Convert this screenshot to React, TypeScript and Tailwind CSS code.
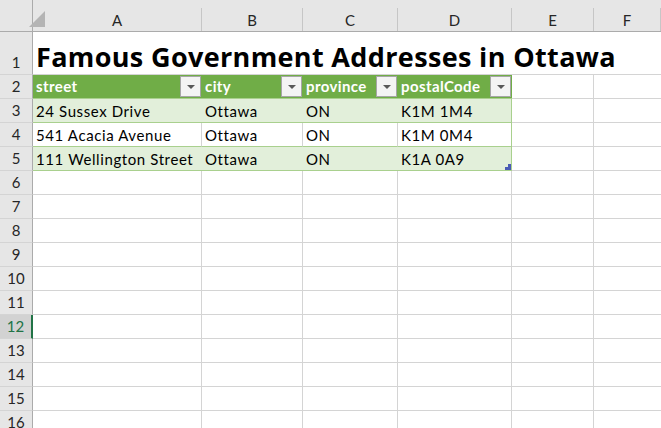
import React from "react";

const COLS = ["A", "B", "C", "D", "E", "F"];
const COL_W = ["w-[169px]", "w-[101px]", "w-[95px]", "w-[114px]", "w-[82px]", "flex-1"];

const HEADERS = ["street", "city", "province", "postalCode"];
const ROWS = [
  ["24 Sussex Drive", "Ottawa", "ON", "K1M 1M4"],
  ["541 Acacia Avenue", "Ottawa", "ON", "K1M 0M4"],
  ["111 Wellington Street", "Ottawa", "ON", "K1A 0A9"],
];

const font = { fontFamily: "Lato, 'Liberation Sans', sans-serif" };

function FilterButton() {
  return (
    <div className="w-[21px] h-[21px] shrink-0 border border-[#a6a6a6] bg-[#f4f4f4] flex items-center justify-center">
      <div className="w-0 h-0 border-l-[4px] border-r-[4px] border-t-[4px] border-l-transparent border-r-transparent border-t-[#595959]" />
    </div>
  );
}

function RowHeader({ n, h, selected }: { n: number; h: string; selected?: boolean }) {
  return (
    <div
      className={`w-[33px] shrink-0 ${h} flex items-end justify-center pb-[1px] text-[15px] tracking-normal border-b border-[#d4d4d4] ${
        selected
          ? "bg-[#d2d2d2] text-[#217346] border-r-2 border-r-[#217346]"
          : "bg-[#e6e6e6] text-[#262626] border-r border-r-[#ababab]"
      }`}
    >
      {n}
    </div>
  );
}

export default function App() {
  return (
    <div className="w-[661px] h-[428px] overflow-hidden bg-white text-[15px] text-black" style={font}>
      {/* column header */}
      <div className="flex h-[32px] bg-[#e6e6e6] border-b border-[#ababab]">
        <div className="w-[33px] shrink-0 border-r border-[#ababab] relative">
          <div className="absolute left-[13px] top-[11px] w-0 h-0 border-l-[16px] border-t-[16px] border-l-transparent border-t-transparent border-b-0 border-r-[16px] border-r-[#b4b4b4]" />
        </div>
        {COLS.map((c, i) => (
          <div key={c} className={`${COL_W[i]} shrink-0 pt-[8px]`}>
            <div className="h-[23px] border-r border-[#c6c6c6] flex items-center justify-center pt-[1px] text-[#262626]">
              {c}
            </div>
          </div>
        ))}
      </div>

      {/* row 1 title */}
      <div className="flex h-[43px]">
        <RowHeader n={1} h="h-[43px]" />
        <div className="flex-1 border-b border-[#d4d4d4] relative">
          <div
            className="absolute left-[3px] bottom-[4px] text-[27px] font-bold leading-none whitespace-nowrap tracking-[0.35px]"
            style={{ fontFamily: "'Open Sans', Lato, sans-serif" }}
          >
            Famous Government Addresses in Ottawa
          </div>
        </div>
      </div>

      {/* row 2 table header */}
      <div className="flex h-[24px]">
        <RowHeader n={2} h="h-[24px]" />
        {HEADERS.map((t, i) => (
          <div
            key={t}
            className={`${COL_W[i]} shrink-0 bg-[#70ad47] border-b border-[#a9d08e] flex items-center justify-between pl-[3px] pr-[1px] text-white font-bold tracking-[0.4px]`}
          >
            <span>{t}</span>
            <FilterButton />
          </div>
        ))}
        <div className="w-[82px] shrink-0 border-r border-b border-[#d4d4d4]" />
        <div className="flex-1 border-b border-[#d4d4d4]" />
      </div>

      {/* data rows */}
      {ROWS.map((r, ri) => {
        const band = ri % 2 === 0;
        return (
          <div key={ri} className="flex h-[24px]">
            <RowHeader n={ri + 3} h="h-[24px]" />
            {r.map((v, ci) => (
              <div
                key={ci}
                className={`${COL_W[ci]} shrink-0 border-b border-[#a9d08e] flex items-end pb-[0px] pl-[3px] relative tracking-[0.6px] ${
                  band
                    ? "bg-[#e2efda]"
                    : ci === 3
                    ? "border-r border-r-[#a9d08e]"
                    : "border-r border-r-[#d4d4d4]"
                } ${band && ci === 3 ? "border-r border-r-[#a9d08e]" : ""}`}
              >
                <span className="whitespace-nowrap">{v}</span>
                {ri === 2 && ci === 3 && (
                  <>
                    <div className="absolute right-0 bottom-0 w-[6px] h-[3px] bg-[#4a5bb5]" />
                    <div className="absolute right-0 bottom-[3px] w-[3px] h-[3px] bg-[#4a5bb5]" />
                  </>
                )}
              </div>
            ))}
            <div className="w-[82px] shrink-0 border-r border-b border-[#d4d4d4]" />
            <div className="flex-1 border-b border-[#d4d4d4]" />
          </div>
        );
      })}

      {/* empty rows */}
      {Array.from({ length: 11 }, (_, k) => {
        const n = k + 6;
        return (
          <div key={n} className="flex h-[24px]">
            <RowHeader n={n} h="h-[24px]" selected={n === 12} />
            {COLS.map((c, i) => (
              <div
                key={c}
                className={`${COL_W[i]} shrink-0 border-b border-[#d4d4d4] ${i < 5 ? "border-r" : ""}`}
              />
            ))}
          </div>
        );
      })}
    </div>
  );
}
